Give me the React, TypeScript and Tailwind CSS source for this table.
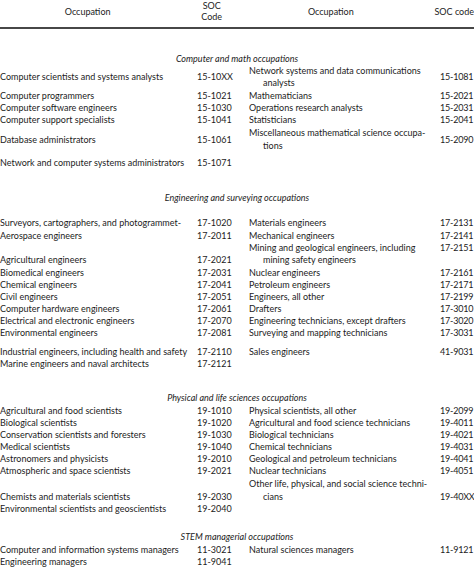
import React from 'react';

type Row = {
  l?: string;
  lc?: string;
  r?: string[];
  rc?: string;
  // rows whose right text starts as the wrapped tail of the line above
  rIndent?: boolean;
  gap?: string;
  tall?: string;
};

type Section = { title: string; gap: string; rows: Row[] };

const sections: Section[] = [
  {
    title: 'Computer and math occupations',
    gap: 'mt-[24px]',
    rows: [
      {
        l: 'Computer scientists and systems analysts',
        lc: '15-10XX',
        r: ['Network systems and data communications', 'analysts'],
        rc: '15-1081',
        tall: 'h-[24px] leading-[12px]',
      },
      { l: 'Computer programmers', lc: '15-1021', r: ['Mathematicians'], rc: '15-2021', gap: 'mt-[1px]' },
      { l: 'Computer software engineers', lc: '15-1030', r: ['Operations research analysts'], rc: '15-2031' },
      { l: 'Computer support specialists', lc: '15-1041', r: ['Statisticians'], rc: '15-2041' },
      {
        l: 'Database administrators',
        lc: '15-1061',
        r: ['Miscellaneous mathematical science occupa-', 'tions'],
        rc: '15-2090',
        tall: 'h-[26px] leading-[13px]',
      },
      { l: 'Network and computer systems administrators', lc: '15-1071', gap: 'mt-[5px]' },
    ],
  },
  {
    title: 'Engineering and surveying occupations',
    gap: 'mt-[23px]',
    rows: [
      { l: 'Surveyors, cartographers, and photogrammet-', lc: '17-1020', r: ['Materials engineers'], rc: '17-2131', gap: 'mt-[13px]' },
      { l: 'Aerospace engineers', lc: '17-2011', r: ['Mechanical engineers'], rc: '17-2141', gap: 'mt-[1px]' },
      { r: ['Mining and geological engineers, including'], rc: '17-2151' },
      { l: 'Agricultural engineers', lc: '17-2021', r: ['mining safety engineers'], rIndent: true },
      { l: 'Biomedical engineers', lc: '17-2031', r: ['Nuclear engineers'], rc: '17-2161', gap: 'mt-[1px]' },
      { l: 'Chemical engineers', lc: '17-2041', r: ['Petroleum engineers'], rc: '17-2171' },
      { l: 'Civil engineers', lc: '17-2051', r: ['Engineers, all other'], rc: '17-2199' },
      { l: 'Computer hardware engineers', lc: '17-2061', r: ['Drafters'], rc: '17-3010' },
      { l: 'Electrical and electronic engineers', lc: '17-2070', r: ['Engineering technicians, except drafters'], rc: '17-3020' },
      { l: 'Environmental engineers', lc: '17-2081', r: ['Surveying and mapping technicians'], rc: '17-3031' },
      { l: 'Industrial engineers, including health and safety', lc: '17-2110', r: ['Sales engineers'], rc: '41-9031', gap: 'mt-[7px]' },
      { l: 'Marine engineers and naval architects', lc: '17-2121' },
    ],
  },
  {
    title: 'Physical and life sciences occupations',
    gap: 'mt-[22px]',
    rows: [
      { l: 'Agricultural and food scientists', lc: '19-1010', r: ['Physical scientists, all other'], rc: '19-2099', gap: 'mt-[1px]' },
      { l: 'Biological scientists', lc: '19-1020', r: ['Agricultural and food science technicians'], rc: '19-4011' },
      { l: 'Conservation scientists and foresters', lc: '19-1030', r: ['Biological technicians'], rc: '19-4021' },
      { l: 'Medical scientists', lc: '19-1040', r: ['Chemical technicians'], rc: '19-4031' },
      { l: 'Astronomers and physicists', lc: '19-2010', r: ['Geological and petroleum technicians'], rc: '19-4041' },
      { l: 'Atmospheric and space scientists', lc: '19-2021', r: ['Nuclear technicians'], rc: '19-4051' },
      { r: ['Other life, physical, and social science techni-'], gap: 'mt-[1px]' },
      { l: 'Chemists and materials scientists', lc: '19-2030', r: ['cians'], rIndent: true, rc: '19-40XX', gap: 'mt-[1px]' },
      { l: 'Environmental scientists and geoscientists', lc: '19-2040' },
    ],
  },
  {
    title: 'STEM managerial occupations',
    gap: 'mt-[16px]',
    rows: [
      { l: 'Computer and information systems managers', lc: '11-3021', r: ['Natural sciences managers'], rc: '11-9121', gap: 'mt-[1px]' },
      { l: 'Engineering managers', lc: '11-9041' },
    ],
  },
];

function TableRow({ row }: { row: Row }) {
  const size = row.tall ?? 'h-[12px] leading-[12px]';
  return (
    <div className={`flex items-center ${size} ${row.gap ?? ''}`}>
      <div className="w-[197px] shrink-0 whitespace-nowrap">{row.l}</div>
      <div className="w-[52px] shrink-0 whitespace-nowrap">{row.lc}</div>
      <div className="w-[191px] shrink-0 whitespace-nowrap">
        {row.r?.map((line, i) => (
          <div key={i} className={i > 0 || row.rIndent ? 'pl-[14px]' : ''}>
            {line}
          </div>
        ))}
      </div>
      <div className="whitespace-nowrap tracking-[-0.2px]">{row.rc}</div>
    </div>
  );
}

export default function App() {
  return (
    <div
      className="w-[474px] h-[568px] overflow-hidden bg-white text-[#1c1c1c] text-[9px]"
      style={{ fontFamily: 'Lato, "Open Sans", sans-serif' }}
    >
      {/* Column headings */}
      <div className="flex items-center h-[22px] leading-[11px]">
        <div className="w-[176px] text-center">Occupation</div>
        <div className="ml-[21px] w-[31px] text-center">
          <div>SOC</div>
          <div>Code</div>
        </div>
        <div className="ml-[21px] w-[166px] text-center">Occupation</div>
        <div className="ml-[21px] whitespace-nowrap">SOC code</div>
      </div>
      <div className="mt-[5px] h-[2px] bg-[#474747]" />

      {sections.map((s) => (
        <div key={s.title}>
          <div className={`h-[12px] leading-[12px] text-center italic ${s.gap}`}>{s.title}</div>
          {s.rows.map((row, i) => (
            <TableRow key={i} row={row} />
          ))}
        </div>
      ))}
    </div>
  );
}
